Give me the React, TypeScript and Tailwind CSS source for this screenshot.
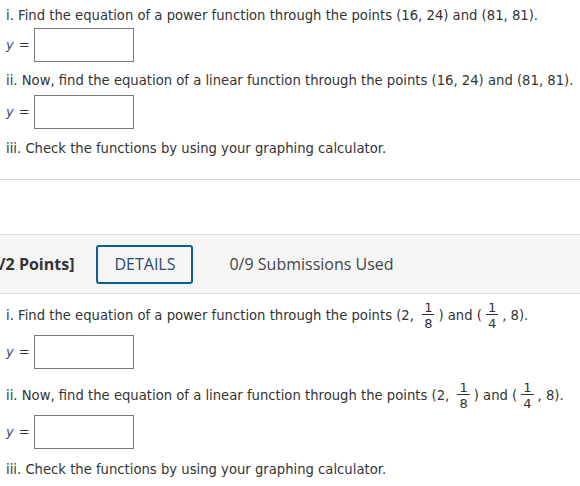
import React from "react";

const body = "font-['DejaVu_Sans',Verdana,sans-serif] text-[13.2px] text-[#333]";

function Frac({ n, d }: { n: string; d: string }) {
  return (
    <span className="inline-flex flex-col items-center mx-[4px] text-[13px] leading-[13px] [vertical-align:8px]">
      <span className="px-[2px]">{n}</span>
      <span className="border-t border-[#333] px-[2px] w-full text-center pt-[2px]">{d}</span>
    </span>
  );
}

function Answer() {
  return (
    <div className="flex items-center h-[34px]">
      <span className="w-[28px] text-[13px] text-[#333] flex items-center">
        <span className="italic text-[#3b4f6e]">y</span>
        <span className="ml-[5px]">=</span>
      </span>
      <div className="w-[100px] h-[34px] border border-[#7a7a7a] bg-white"></div>
    </div>
  );
}

export default function App() {
  return (
    <div className={`w-[580px] h-[486px] overflow-hidden bg-white ${body}`}>
      <div className="pl-[6px]">
        <p className="pt-[6px] leading-[20px] whitespace-nowrap">i. Find the equation of a power function through the points (16, 24) and (81, 81).</p>
        <div className="mt-[2px]"><Answer /></div>
        <p className="mt-[9px] leading-[20px] whitespace-nowrap">ii. Now, find the equation of a linear function through the points (16, 24) and (81, 81).</p>
        <div className="mt-[4px]"><Answer /></div>
        <p className="mt-[10px] leading-[20px] whitespace-nowrap">iii. Check the functions by using your graphing calculator.</p>
      </div>
      <div className="mt-[20px] border-t border-[#d0d0d0]"></div>
      <div className="mt-[54px] h-[60px] bg-[#f5f5f5] border-t border-b border-[#dcdcdc] flex items-center font-['Open_Sans',sans-serif] text-[16px]">
        <span className="font-bold text-[#333] ml-[-1px]">/2 Points]</span>
        <div className="ml-[22px] w-[97px] h-[39px] border-2 border-[#0e5f91] rounded-[3px] flex items-center justify-center text-[#2b4a6e] font-medium">DETAILS</div>
        <span className="ml-[36px] text-[#444]">0/9 Submissions Used</span>
      </div>
      <div className="pl-[6px]">
        <p className="mt-[7px] h-[28px] leading-[28px] whitespace-nowrap">
          i. Find the equation of a power function through the points (2, <Frac n="1" d="8" />) and (<Frac n="1" d="4" />, 8).
        </p>
        <div className="mt-[6px]"><Answer /></div>
        <p className="mt-[12px] h-[28px] leading-[28px] whitespace-nowrap">
          ii. Now, find the equation of a linear function through the points (2, <Frac n="1" d="8" />) and (<Frac n="1" d="4" />, 8).
        </p>
        <div className="mt-[6px]"><Answer /></div>
        <p className="mt-[11px] leading-[20px] whitespace-nowrap">iii. Check the functions by using your graphing calculator.</p>
      </div>
    </div>
  );
}
